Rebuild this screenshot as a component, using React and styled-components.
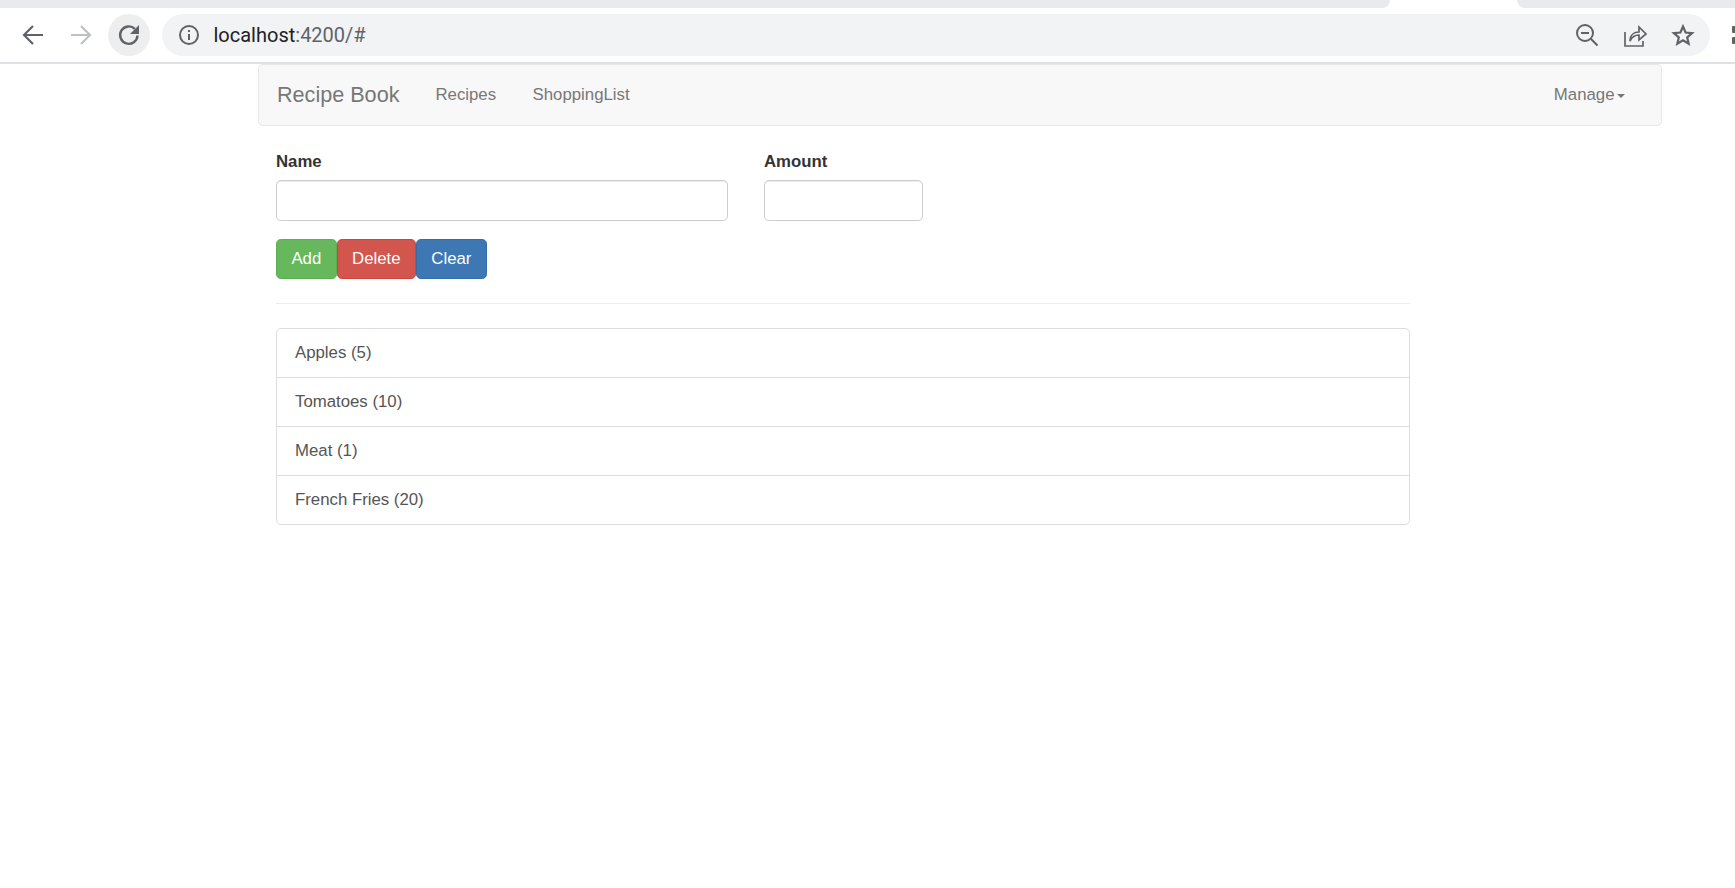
import React from 'react';
import styled, { createGlobalStyle } from 'styled-components';

const GlobalStyle = createGlobalStyle`
  html, body {
    margin: 0;
    padding: 0;
    height: 100%;
    background: #fff;
    overflow: hidden;
  }
  * {
    box-sizing: border-box;
  }
`;

const Page = styled.div`
  width: 1735px;
  height: 888px;
  overflow: hidden;
  font-family: "Liberation Sans", Arial, sans-serif;
  font-size: 16.8px;
  line-height: 24px;
  color: #333;
`;

const TabStrip = styled.div`
  display: flex;
  justify-content: space-between;
  height: 8px;
  background: #fff;
`;

const TabBack = styled.div`
  height: 8px;
  background: #e8eaed;
  width: ${props => props.$width}px;
  border-radius: ${props => props.$radius};
`;

const Toolbar = styled.div`
  display: flex;
  align-items: center;
  height: 56px;
  padding: 0 0 0 12px;
  background: #fff;
  border-bottom: 2px solid #dfe1e5;
`;

const NavButton = styled.div`
  width: 42px;
  height: 42px;
  margin-right: 6px;
  display: flex;
  align-items: center;
  justify-content: center;
  flex-shrink: 0;
  border-radius: 50%;
  background: ${props => (props.$active ? '#eeeeee' : 'transparent')};
`;

const Omnibox = styled.div`
  display: flex;
  align-items: center;
  width: 1548px;
  height: 42px;
  margin-left: 6px;
  padding: 0 15px 0 16px;
  flex-shrink: 0;
  border-radius: 21px;
  background: #f1f3f4;
`;

const Url = styled.div`
  flex: 1;
  margin-left: 13.5px;
  font-family: Roboto, "Liberation Sans", sans-serif;
  font-size: 20px;
  color: #202124;
`;

const UrlRest = styled.span`
  color: #5f6368;
`;

const OmniIcons = styled.div`
  display: flex;
  align-items: center;
  gap: 24px;
`;

const ExtensionDots = styled.div`
  margin-left: 22px;
  display: grid;
  grid-template-columns: 7px 7px;
  gap: 4px;
  flex-shrink: 0;
`;

const Dot = styled.span`
  width: 7px;
  height: 7px;
  border-radius: 1px;
  background: #5f6368;
`;

const Content = styled.div`
  width: 1404px;
  margin-left: 258px;
`;

const Navbar = styled.nav`
  display: flex;
  align-items: center;
  height: 62px;
  padding: 0 36px 0 18px;
  background: #f8f8f8;
  border: 1px solid #e7e7e7;
  border-radius: 4.8px;
`;

const Brand = styled.a`
  margin-right: 36px;
  font-size: 21.6px;
  color: #777;
`;

const NavLink = styled.a`
  margin-right: 36.5px;
  color: #777;
`;

const Manage = styled.a`
  margin-left: auto;
  display: flex;
  align-items: center;
  color: #777;
`;

const Caret = styled.span`
  width: 0;
  height: 0;
  margin-left: 2.5px;
  margin-top: 2px;
  border-top: 4px solid #777;
  border-left: 4px solid transparent;
  border-right: 4px solid transparent;
`;

const Column = styled.div`
  width: 1170px;
  padding: 0 18px;
`;

const FormRow = styled.div`
  display: flex;
  gap: 36px;
  padding-top: 24px;
`;

const Field = styled.div`
  width: ${props => props.$width}px;
`;

const Label = styled.label`
  display: block;
  margin-bottom: 6px;
  font-weight: 700;
  color: #333;
`;

const Input = styled.input`
  display: block;
  width: 100%;
  height: 41px;
  border: 1px solid #ccc;
  border-radius: 4.8px;
  background: #fff;
  box-shadow: inset 0 1px 1px rgba(0, 0, 0, 0.075);
`;

const Buttons = styled.div`
  display: flex;
  margin-top: 18px;
`;

const Button = styled.button`
  height: 40px;
  padding: 0 14.4px;
  font-family: inherit;
  font-size: 16.8px;
  color: #fff;
  background: ${props => props.$bg};
  border: 1px solid ${props => props.$border};
  border-radius: 4.8px;
`;

const Divider = styled.hr`
  margin: 24px 0;
  border: 0;
  border-top: 1px solid #eee;
`;

const List = styled.ul`
  margin: 0;
  padding: 0;
  list-style: none;
  border: 1px solid #ddd;
  border-radius: 4.8px;
`;

const ListItem = styled.li`
  padding: 12px 18px;
  color: #555;
  & + & {
    border-top: 1px solid #ddd;
  }
`;

const ingredients = ['Apples (5)', 'Tomatoes (10)', 'Meat (1)', 'French Fries (20)'];

export default function App() {
  return (
    <Page>
      <GlobalStyle />
      <TabStrip>
        <TabBack $width={1390} $radius="0 0 12px 0" />
        <TabBack $width={218} $radius="0 0 0 12px" />
      </TabStrip>
      <Toolbar>
        <NavButton>
          <svg width="24" height="24" viewBox="0 0 24 24" fill="none" stroke="#5f6368" strokeWidth="2.2">
            <path d="M22 12H3M12 3l-9 9 9 9" />
          </svg>
        </NavButton>
        <NavButton>
          <svg width="24" height="24" viewBox="0 0 24 24" fill="none" stroke="#bdc1c6" strokeWidth="2.2">
            <path d="M2 12h19M12 3l9 9-9 9" />
          </svg>
        </NavButton>
        <NavButton $active>
          <svg width="24" height="24" viewBox="0 0 24 24" fill="none">
            <path d="M20.5 12.5a8.7 8.7 0 1 1-2.6-6.6" stroke="#5f6368" strokeWidth="2.4" />
            <path d="M22 2v9h-9z" fill="#5f6368" />
          </svg>
        </NavButton>
        <Omnibox>
          <svg width="22" height="22" viewBox="0 0 22 22" fill="none">
            <circle cx="11" cy="11" r="9" stroke="#5f6368" strokeWidth="2" />
            <path d="M11 10v6M11 6v2" stroke="#5f6368" strokeWidth="2" />
          </svg>
          <Url>
            localhost<UrlRest>:4200/#</UrlRest>
          </Url>
          <OmniIcons>
            <svg width="24" height="24" viewBox="0 0 24 24" fill="none" stroke="#5f6368" strokeWidth="2">
              <circle cx="10" cy="10" r="8" />
              <path d="M6 10h8M16 16l6.5 6.5" />
            </svg>
            <svg width="24" height="24" viewBox="0 0 24 24" fill="none" stroke="#5f6368" strokeWidth="1.7">
              <path d="M2 9v14h18v-5M7 18c0-6 4-9 9-9V4l7 7-7 6v-5c-4 0-7 2-9 6z" />
            </svg>
            <svg width="24" height="24" viewBox="0 0 24 24" fill="none" stroke="#5f6368" strokeWidth="2.2">
              <path d="M12 3.5l2.6 6 6.5.6-4.9 4.3 1.5 6.4-5.7-3.4-5.7 3.4 1.5-6.4-4.9-4.3 6.5-.6z" />
            </svg>
          </OmniIcons>
        </Omnibox>
        <ExtensionDots>
          <Dot />
          <Dot />
          <Dot />
          <Dot />
        </ExtensionDots>
      </Toolbar>
      <Content>
        <Navbar>
          <Brand>Recipe Book</Brand>
          <NavLink>Recipes</NavLink>
          <NavLink>ShoppingList</NavLink>
          <Manage>
            Manage
            <Caret />
          </Manage>
        </Navbar>
        <Column>
          <FormRow>
            <Field $width={452}>
              <Label>Name</Label>
              <Input />
            </Field>
            <Field $width={159}>
              <Label>Amount</Label>
              <Input />
            </Field>
          </FormRow>
          <Buttons>
            <Button $bg="#67b75c" $border="#5dae52">Add</Button>
            <Button $bg="#d2554e" $border="#cc443c">Delete</Button>
            <Button $bg="#3d78b5" $border="#336da6">Clear</Button>
          </Buttons>
          <Divider />
          <List>
            {ingredients.map(item => (
              <ListItem key={item}>{item}</ListItem>
            ))}
          </List>
        </Column>
      </Content>
    </Page>
  );
}
